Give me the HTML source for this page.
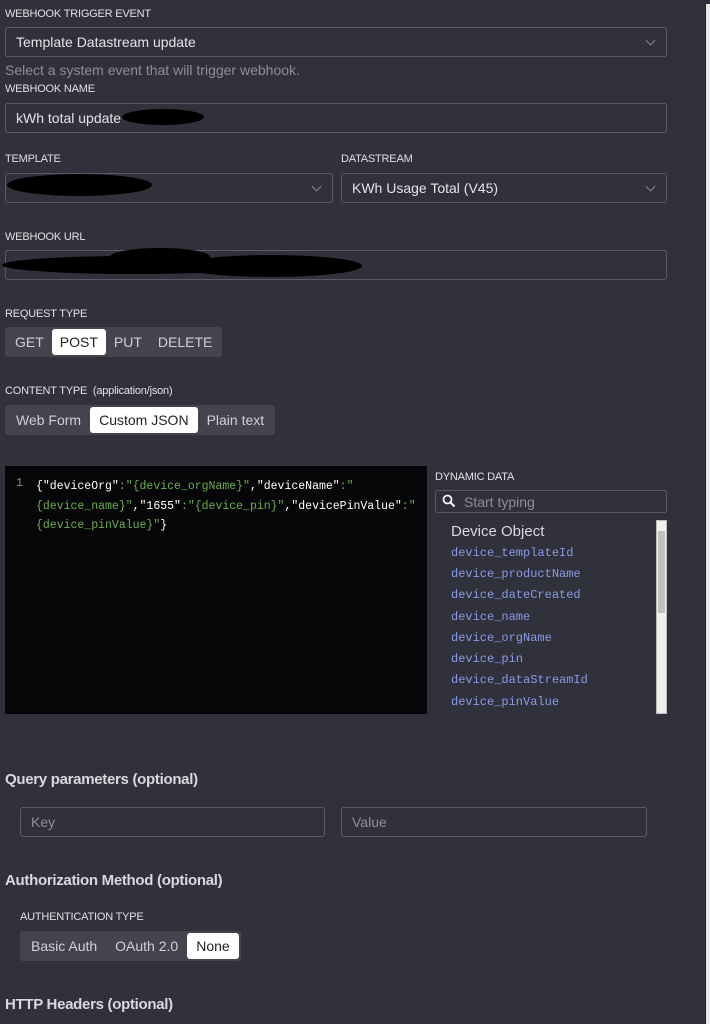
<!DOCTYPE html>
<html><head><meta charset="utf-8"><style>
*{box-sizing:border-box;margin:0;padding:0}
body{width:710px;height:1024px;overflow:hidden;background:#30313b;font-family:"Liberation Sans",sans-serif;color:#e4e4e8;position:relative}
.a{position:absolute}
.lbl{font-size:11px;color:#e0e0e4;letter-spacing:-0.2px}
.box{border:1px solid #5a5b66;border-radius:3px;background:#30313b;font-size:14px;padding-left:10px;display:flex;align-items:center}
.chev{position:absolute;right:12px;top:50%;width:7px;height:7px;border-right:1px solid #8a8b93;border-bottom:1px solid #8a8b93;transform:translateY(-70%) rotate(45deg)}
.seg{background:#43444e;border-radius:3px;display:flex;align-items:center;padding:2px;font-size:14px;color:#d0d0d6}
.seg span{padding:0 9px;height:26px;line-height:26px}
.seg.r span{padding:0 8px}
.seg .on{background:#fff;color:#222;border-radius:3px}
.blob{position:absolute;background:#000;border-radius:50%}
.h{font-size:15px;font-weight:bold;color:#d8d8de;letter-spacing:-0.3px}
.mono{font-family:"Liberation Mono",monospace;font-size:11.5px}
.g{color:#6ab04c}.w{color:#fff}.d{color:#8a8b93}
.dd{color:#8a9ae8;font-family:"Liberation Mono",monospace;font-size:12px;position:absolute;left:451px}
</style></head><body>
<div class="a" style="right:0;top:4px;width:5px;height:1020px;background:#e8e8ea;border-left:1px solid #222"></div>

<div class="a lbl" style="left:5px;top:8px">WEBHOOK TRIGGER EVENT</div>
<div class="a box" style="left:5px;top:27px;width:662px;height:30px">Template Datastream update<div class="chev"></div></div>
<div class="a" style="left:5px;top:62px;font-size:14px;color:#8d8e96">Select a system event that will trigger webhook.</div>
<div class="a lbl" style="left:5px;top:83px">WEBHOOK NAME</div>
<div class="a box" style="left:5px;top:103px;width:662px;height:30px">kWh total update</div>
<div class="blob" style="left:122px;top:109px;width:82px;height:16px"></div>

<div class="a lbl" style="left:5px;top:153px">TEMPLATE</div>
<div class="a lbl" style="left:341px;top:153px">DATASTREAM</div>
<div class="a box" style="left:5px;top:173px;width:328px;height:30px"><div class="chev"></div></div>
<div class="blob" style="left:7px;top:174px;width:145px;height:22px"></div>
<div class="a box" style="left:341px;top:173px;width:326px;height:30px">KWh Usage Total (V45)<div class="chev"></div></div>

<div class="a lbl" style="left:5px;top:231px">WEBHOOK URL</div>
<div class="a box" style="left:5px;top:250px;width:662px;height:30px"></div>
<div class="blob" style="left:2px;top:256px;width:265px;height:18px"></div>
<div class="blob" style="left:110px;top:248px;width:100px;height:18px"></div>
<div class="blob" style="left:180px;top:255px;width:182px;height:22px"></div>

<div class="a lbl" style="left:5px;top:308px">REQUEST TYPE</div>
<div class="a seg r" style="left:5px;top:327px;height:30px"><span>GET</span><span class="on">POST</span><span>PUT</span><span>DELETE</span></div>

<div class="a lbl" style="left:5px;top:385px">CONTENT TYPE &nbsp;(application/json)</div>
<div class="a seg" style="left:5px;top:405px;height:30px"><span>Web Form</span><span class="on">Custom JSON</span><span>Plain text</span></div>

<div class="a" style="left:5px;top:466px;width:422px;height:248px;background:#060608"></div>
<div class="a mono d" style="left:16px;top:477px">1</div>
<div class="a mono" style="left:36px;top:477px;line-height:19.5px;white-space:nowrap"><span class="w">{"deviceOrg"</span><span class="g">:"{device_orgName}"</span><span class="w">,"deviceName"</span><span class="g">:"<br>{device_name}"</span><span class="w">,"1655"</span><span class="g">:"{device_pin}"</span><span class="w">,"devicePinValue"</span><span class="g">:"<br>{device_pinValue}"</span><span class="w">}</span></div>

<div class="a lbl" style="left:435px;top:471px">DYNAMIC DATA</div>
<div class="a box" style="left:435px;top:490px;width:232px;height:23px;padding-left:28px;color:#8d8e96">Start typing</div>
<svg class="a" style="left:442px;top:494px" width="14" height="14" viewBox="0 0 14 14"><circle cx="5.5" cy="5.5" r="4" fill="none" stroke="#fff" stroke-width="1.8"/><path d="M8.5 8.5L12.5 12.5" stroke="#fff" stroke-width="2"/></svg>
<div class="a" style="left:451px;top:523px;font-size:15px;color:#d8d8de">Device Object</div>
<div class="dd" style="top:546px">device_templateId</div>
<div class="dd" style="top:567px">device_productName</div>
<div class="dd" style="top:588px">device_dateCreated</div>
<div class="dd" style="top:610px">device_name</div>
<div class="dd" style="top:631px">device_orgName</div>
<div class="dd" style="top:652px">device_pin</div>
<div class="dd" style="top:673px">device_dataStreamId</div>
<div class="dd" style="top:695px">device_pinValue</div>
<div class="a" style="left:656px;top:520px;width:11px;height:194px;background:#f0f0f0;border:1px solid #bbb"></div>
<div class="a" style="left:658px;top:531px;width:7px;height:82px;background:#c0c0c0"></div>

<div class="a h" style="left:5px;top:771px">Query parameters (optional)</div>
<div class="a box" style="left:20px;top:807px;width:305px;height:30px;color:#8d8e96">Key</div>
<div class="a box" style="left:341px;top:807px;width:306px;height:30px;color:#8d8e96">Value</div>

<div class="a h" style="left:5px;top:872px">Authorization Method (optional)</div>
<div class="a lbl" style="left:20px;top:911px">AUTHENTICATION TYPE</div>
<div class="a seg" style="left:20px;top:931px;height:30px"><span>Basic Auth</span><span>OAuth 2.0</span><span class="on">None</span></div>

<div class="a h" style="left:5px;top:996px">HTTP Headers (optional)</div>
</body></html>
